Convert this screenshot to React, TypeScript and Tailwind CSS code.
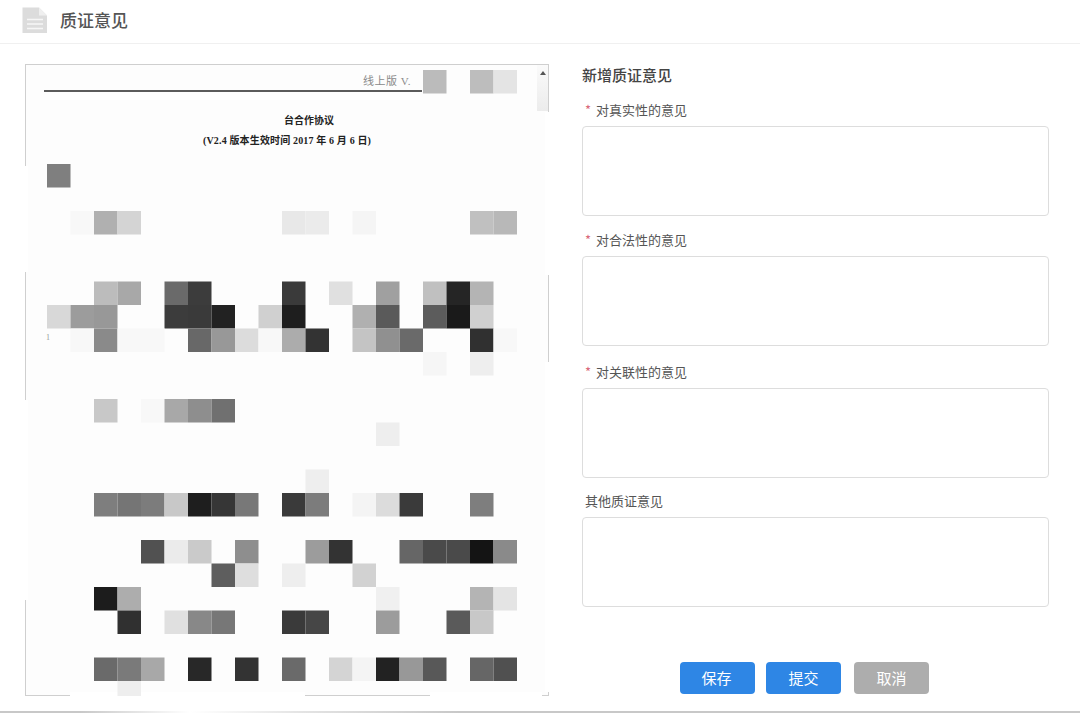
const CELL = 23.5;

// [row, col, grey] of the mosaic laid over the scanned document
const mosaic: [number, number, string][] = [
  [0, 16, "#bbbbbb"], [0, 18, "#bdbdbd"], [0, 19, "#e4e4e4"],
  [4, 0, "#7f7f7f"],
  [6, 1, "#f8f8f8"], [6, 2, "#b0b0b0"], [6, 3, "#d4d4d4"], [6, 10, "#e8e8e8"], [6, 11, "#ebebeb"], [6, 13, "#f5f5f5"], [6, 18, "#c0c0c0"], [6, 19, "#b8b8b8"],
  [9, 2, "#bcbcbc"], [9, 3, "#a8a8a8"], [9, 5, "#6a6a6a"], [9, 6, "#3c3c3c"], [9, 10, "#3a3a3a"], [9, 12, "#e0e0e0"], [9, 14, "#a0a0a0"], [9, 16, "#c0c0c0"], [9, 17, "#252525"], [9, 18, "#b4b4b4"],
  [10, 0, "#d8d8d8"], [10, 1, "#9c9c9c"], [10, 2, "#989898"], [10, 5, "#3c3c3c"], [10, 6, "#3a3a3a"], [10, 7, "#222222"], [10, 9, "#d0d0d0"], [10, 10, "#1e1e1e"], [10, 13, "#b0b0b0"], [10, 14, "#5a5a5a"], [10, 16, "#5c5c5c"], [10, 17, "#1a1a1a"], [10, 18, "#d0d0d0"],
  [11, 1, "#f8f8f8"], [11, 2, "#8a8a8a"], [11, 3, "#f8f8f8"], [11, 4, "#f8f8f8"], [11, 6, "#686868"], [11, 7, "#989898"], [11, 8, "#dcdcdc"], [11, 9, "#f8f8f8"], [11, 10, "#acacac"], [11, 11, "#333333"], [11, 13, "#c4c4c4"], [11, 14, "#909090"], [11, 15, "#6a6a6a"], [11, 18, "#303030"], [11, 19, "#f8f8f8"],
  [12, 16, "#f6f6f6"], [12, 18, "#eeeeee"],
  [14, 2, "#c8c8c8"], [14, 4, "#f8f8f8"], [14, 5, "#a8a8a8"], [14, 6, "#8e8e8e"], [14, 7, "#707070"],
  [15, 14, "#eeeeee"],
  [17, 11, "#eeeeee"],
  [18, 2, "#7e7e7e"], [18, 3, "#757575"], [18, 4, "#7c7c7c"], [18, 5, "#c8c8c8"], [18, 6, "#1e1e1e"], [18, 7, "#363636"], [18, 8, "#787878"], [18, 10, "#3a3a3a"], [18, 11, "#7c7c7c"], [18, 13, "#f4f4f4"], [18, 14, "#dcdcdc"], [18, 15, "#3a3a3a"], [18, 18, "#7e7e7e"],
  [20, 4, "#515151"], [20, 5, "#ebebeb"], [20, 6, "#cacaca"], [20, 8, "#8e8e8e"], [20, 11, "#9c9c9c"], [20, 12, "#333333"], [20, 15, "#666666"], [20, 16, "#4a4a4a"], [20, 17, "#4a4a4a"], [20, 18, "#141414"], [20, 19, "#8a8a8a"],
  [21, 7, "#5e5e5e"], [21, 8, "#dedede"], [21, 10, "#eeeeee"], [21, 13, "#d2d2d2"],
  [22, 2, "#1c1c1c"], [22, 3, "#adadad"], [22, 14, "#f0f0f0"], [22, 18, "#b4b4b4"], [22, 19, "#e4e4e4"],
  [23, 3, "#303030"], [23, 5, "#e0e0e0"], [23, 6, "#888888"], [23, 7, "#777777"], [23, 10, "#3a3a3a"], [23, 11, "#464646"], [23, 14, "#9c9c9c"], [23, 17, "#5a5a5a"], [23, 18, "#c8c8c8"],
  [25, 2, "#6a6a6a"], [25, 3, "#7a7a7a"], [25, 4, "#a8a8a8"], [25, 6, "#282828"], [25, 8, "#333333"], [25, 10, "#6a6a6a"], [25, 12, "#d4d4d4"], [25, 13, "#f4f4f4"], [25, 14, "#222222"], [25, 15, "#989898"], [25, 16, "#585858"], [25, 18, "#666666"], [25, 19, "#505050"],
  [26, 3, "#eeeeee"],
];

function DocIcon() {
  return (
    <svg width="26" height="27" viewBox="0 0 26 27" className="shrink-0">
      <path d="M0.5 0.5h16.5l8 8v17.5H0.5z" fill="#dcdcdc" />
      <path d="M17 0.5l8 8h-8z" fill="#efefef" />
      <path d="M5 12.5h16M5 17h16M5 21.5h16" stroke="#f6f6f6" strokeWidth="1.6" />
    </svg>
  );
}

function Mosaic() {
  // viewBox is in page coordinates, so cells can be read straight off the picture
  return (
    <svg className="absolute -inset-px" width="524" height="632" viewBox="25 64 524 632">
      {/* smudged-out parts of the panel border */}
      <rect x="24" y="166" width="4" height="106" fill="#ffffff" />
      <rect x="24" y="400" width="4" height="200" fill="#ffffff" />
      <rect x="70" y="692" width="235" height="5" fill="#ffffff" />
      <rect x="430" y="692" width="112" height="5" fill="#ffffff" />
      <rect x="545" y="112" width="5" height="163" fill="#ffffff" />
      <rect x="545" y="362" width="5" height="330" fill="#ffffff" />
      {mosaic.map(([row, col, fill]) => (
        <rect key={`${row}-${col}`} x={47 + col * CELL} y={70 + row * CELL} width={CELL} height={CELL} fill={fill} />
      ))}
    </svg>
  );
}

function DocPanel() {
  return (
    <div className="relative h-[632px] w-[524px] shrink-0 border border-[#cfcfcf] bg-[#fdfdfd] font-['Liberation_Serif','Noto_Sans_CJK_SC',serif]">
      <div className="mr-[126px] ml-[18px] flex h-[27px] items-end justify-end border-b-2 border-[#5a5a5a] pr-[11px] pb-[1px] text-[11px] leading-[16px] tracking-[0.5px] text-[#8a8a8a]">
        线上版 V.
      </div>
      <p className="mt-[22px] pl-[258px] text-[10px] leading-[14px] font-bold text-[#222]">台合作协议</p>
      <p className="mt-[6px] pl-[177px] text-[10px] leading-[14px] tracking-[0.15px] font-bold text-[#222]">(V2.4 版本生效时间 2017 年 6 月 6 日)</p>
      <Mosaic />
      <div className="absolute top-0 right-0 flex h-[46px] w-[11px] justify-center bg-gradient-to-b from-[#fafafa] to-[#ececec] pt-[6px]">
        <div className="h-0 w-0 border-x-[3px] border-b-[4px] border-x-transparent border-b-[#555]" />
      </div>
      <span className="absolute top-[268px] left-[20px] text-[8px] leading-[10px] text-[#999]">1</span>
    </div>
  );
}

function Field({ label, required = true, className }: { label: string; required?: boolean; className: string }) {
  return (
    <div className={className}>
      <div className="flex h-[18px] items-center pl-[3px] text-[13px] text-[#555]">
        {required && <span className="mr-[5px] w-[6px] text-[#d9687a]">*</span>}
        {label}
      </div>
      <textarea className="mt-[7px] block h-[90px] w-full resize-none rounded-[4px] border border-[#dddddd] bg-white" />
    </div>
  );
}

export default function App() {
  return (
    <div className="flex h-[713px] w-[1080px] flex-col overflow-hidden bg-white font-['Noto_Sans_CJK_SC',sans-serif]">
      <header className="flex h-[44px] shrink-0 items-center gap-[12px] border-b border-[#f0f0f0] pb-[3px] pl-[22px]">
        <DocIcon />
        <h1 className="text-[17px] font-medium text-[#555]">质证意见</h1>
      </header>

      <main className="flex flex-1 pt-[20px] pl-[25px]">
        <DocPanel />

        <section className="ml-[33px] flex w-[467px] flex-col">
          <h2 className="flex h-[22px] items-center text-[15px] leading-[20px] font-medium text-[#444]">新增质证意见</h2>
          <Field label="对真实性的意见" className="mt-[15px]" />
          <Field label="对合法性的意见" className="mt-[15px]" />
          <Field label="对关联性的意见" className="mt-[17px]" />
          <Field label="其他质证意见" required={false} className="mt-[14px]" />

          <div className="mt-[55px] ml-[98px] flex">
            <button className="h-[32px] w-[75px] rounded-[4px] bg-[#2e86e5] pr-[2px] text-[15px] text-white">保存</button>
            <button className="ml-[11px] h-[32px] w-[75px] rounded-[4px] bg-[#2e86e5] text-[15px] text-white">提交</button>
            <button className="ml-[13px] h-[32px] w-[75px] rounded-[4px] bg-[#adadad] text-[15px] text-white">取消</button>
          </div>
        </section>
      </main>

      <div className="h-[2px] shrink-0 bg-[linear-gradient(90deg,#c8c8c8_0,#c8c8c8_80px,#ffffff_190px,#e4e4e4_300px,#c8c8c8_460px,#c8c8c8_100%)]" />
    </div>
  );
}
